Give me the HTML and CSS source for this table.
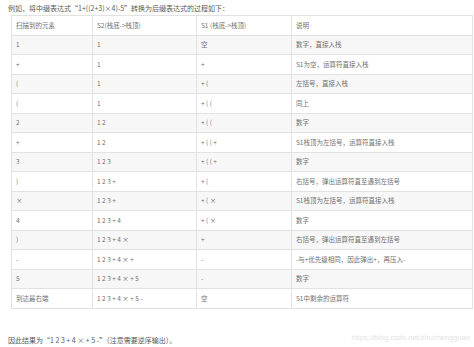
FILE: index.html
```html
<!DOCTYPE html>
<html>
<head>
<meta charset="utf-8">
<link rel="stylesheet" href="styles.css">
</head>
<body>
<div class="page">
  <p class="intro">例如，将中缀表达式“1+((2+3)×4)-5”转换为后缀表达式的过程如下：</p>
  <table class="tbl">
    <colgroup><col class="c1"><col class="c2"><col class="c3"><col class="c4"></colgroup>
    <tr><td>扫描到的元素</td><td>S2(栈底-&gt;栈顶)</td><td>S1 (栈底-&gt;栈顶)</td><td>说明</td></tr>
    <tr><td>1</td><td>1</td><td>空</td><td>数字，直接入栈</td></tr>
    <tr><td>+</td><td>1</td><td>+</td><td>S1为空，运算符直接入栈</td></tr>
    <tr><td>(</td><td>1</td><td>+ (</td><td>左括号，直接入栈</td></tr>
    <tr><td>(</td><td>1</td><td>+ ( (</td><td>同上</td></tr>
    <tr><td>2</td><td>1 2</td><td>+ ( (</td><td>数字</td></tr>
    <tr><td>+</td><td>1 2</td><td>+ ( ( +</td><td>S1栈顶为左括号，运算符直接入栈</td></tr>
    <tr><td>3</td><td>1 2 3</td><td>+ ( ( +</td><td>数字</td></tr>
    <tr><td>)</td><td>1 2 3 +</td><td>+ (</td><td>右括号，弹出运算符直至遇到左括号</td></tr>
    <tr><td>×</td><td>1 2 3 +</td><td>+ ( ×</td><td>S1栈顶为左括号，运算符直接入栈</td></tr>
    <tr><td>4</td><td>1 2 3 + 4</td><td>+ ( ×</td><td>数字</td></tr>
    <tr><td>)</td><td>1 2 3 + 4 ×</td><td>+</td><td>右括号，弹出运算符直至遇到左括号</td></tr>
    <tr><td>-</td><td>1 2 3 + 4 × +</td><td>-</td><td>-与+优先级相同，因此弹出+，再压入-</td></tr>
    <tr><td>5</td><td>1 2 3 + 4 × + 5</td><td>-</td><td>数字</td></tr>
    <tr><td>到达最右端</td><td>1 2 3 + 4 × + 5 -</td><td>空</td><td>S1中剩余的运算符</td></tr>
  </table>
  <p class="result">因此结果为“1 2 3 + 4 × + 5 -”（注意需要逆序输出）。</p>
  <span class="mark">https://blog.csdn.net/zhuzhengguan</span>
</div>
</body>
</html>
```
FILE: styles.css
```css
html, body {
  margin: 0;
  padding: 0;
  background: #fff;
}
.page {
  position: relative;
  width: 474px;
  height: 347px;
  overflow: hidden;
  font-family: "Noto Sans CJK SC", "Open Sans", sans-serif;
  font-size: 6.5px;
  color: #707070;
}
.intro {
  margin: 0;
  padding: 4px 0 0 8px;
  height: 11px;
  line-height: 9px;
  font-size: 7px;
  color: #5a5a5a;
}
.tbl {
  margin: 0 0 0 11px;
  width: 461px;
  border-collapse: collapse;
  table-layout: fixed;
}
.c1 { width: 81px; }
.c2 { width: 104px; }
.c3 { width: 95px; }
.c4 { width: 181px; }
.tbl td {
  height: 18.5px;
  padding: 0 4px;
  border: 1px solid #e2e2e2;
  line-height: 9px;
  vertical-align: middle;
  white-space: nowrap;
}
.tbl tr:nth-child(even) td {
  background: #f7f7f7;
}
.result {
  margin: 0;
  padding: 27px 0 0 8px;
  line-height: 9px;
  font-size: 7px;
  color: #5a5a5a;
}
.mark {
  position: absolute;
  right: 4px;
  bottom: 5px;
  font-family: "Liberation Sans", sans-serif;
  font-size: 7.5px;
  color: #e4e4e4;
}
```
